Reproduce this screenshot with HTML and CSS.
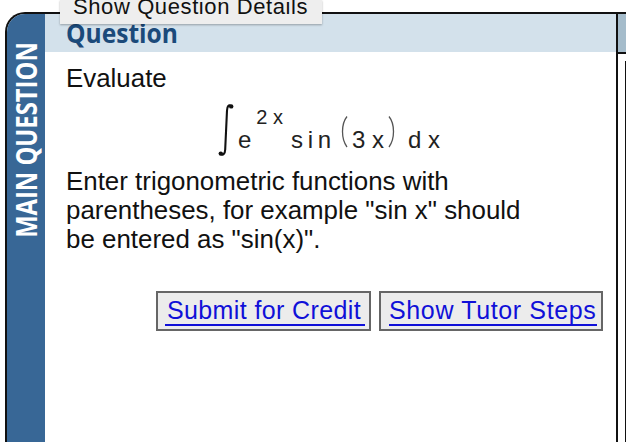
FILE: index.html
```html
<!DOCTYPE html>
<html lang="en">
<head>
<meta charset="utf-8">
<title>Main Question</title>
<link rel="stylesheet" href="styles.css">
</head>
<body>
<div class="tooltip">Show Question Details</div>
<div class="frame">
  <div class="panel">
    <aside class="side"><span class="side-label">MAIN QUESTION</span></aside>
    <main class="content">
      <h1 class="head"><span class="head-text">Question</span></h1>
      <div class="body">
        <p class="line">Evaluate</p>
        <div class="math">
          <svg class="integral" width="16" height="54" viewBox="0 0 16 54"><path d="M13 3C10.8 1.4 9.2 3 9 7.5L7.2 46.5C7 51 5 52.6 2.8 51" fill="none" stroke="#111" stroke-width="2.1"/><circle cx="13.2" cy="3.4" r="2.2" fill="#111"/><circle cx="2.8" cy="50.6" r="2.2" fill="#111"/></svg>
          <span class="m-base">e</span>
          <span class="m-sup">2 x</span>
          <span class="m-fn">s i n</span>
          <svg class="paren paren-open" width="13" height="34" viewBox="0 0 13 34"><path d="M10 1.5C4 9 4 24 10 32" fill="none" stroke="#555" stroke-width="1.3"/></svg>
          <span class="m-arg">3 x</span>
          <svg class="paren paren-close" width="13" height="34" viewBox="0 0 13 34"><path d="M2 1.5C8 9 8 24 2 32" fill="none" stroke="#555" stroke-width="1.3"/></svg>
          <span class="m-dx">d x</span>
        </div>
        <p class="para">Enter trigonometric functions with<br>parentheses, for example "sin x" should<br>be entered as "sin(x)".</p>
        <div class="actions">
          <div class="btn btn-submit"><a href="#" class="btn-link btn-link-submit">Submit for Credit</a></div>
          <div class="btn btn-tutor"><a href="#" class="btn-link btn-link-tutor">Show Tutor Steps</a></div>
        </div>
      </div>
    </main>
  </div>
  <div class="rail"><div class="rail-top"></div><div class="rail-body"></div></div>
</div>
</body>
</html>
```
FILE: styles.css
```css
html, body {
  margin: 0;
  padding: 0;
  width: 626px;
  height: 442px;
  overflow: hidden;
  background: #fff;
  font-family: "Liberation Sans", Arial, sans-serif;
  color: #111;
}
.tooltip {
  position: absolute;
  left: 60px;
  top: 0;
  width: 262px;
  height: 24px;
  box-sizing: border-box;
  padding-left: 13px;
  background: #eeeeee;
  box-shadow: 0 1px 2px rgba(0,0,0,.3);
  font-size: 22px;
  line-height: 14px;
  letter-spacing: 0.6px;
  white-space: nowrap;
  color: #111;
  z-index: 2;
}
.frame {
  display: flex;
  margin-top: 12px;
  margin-left: 5px;
  height: 430px;
}
.panel {
  display: flex;
  width: 613px;
  flex: none;
  box-sizing: border-box;
  border-top: 2px solid #111;
  border-left: 2px solid #111;
  border-right: 2px solid #111;
  border-top-left-radius: 20px;
  overflow: hidden;
}
.side {
  width: 38px;
  flex: none;
  background: #386796;
  display: flex;
  justify-content: center;
  align-items: flex-start;
}
.side-label {
  writing-mode: vertical-rl;
  transform: rotate(180deg) scaleY(0.85);
  transform-origin: center;
  margin-top: 11px;
  color: #fff;
  font-family: "Open Sans", sans-serif;
  font-weight: 700;
  font-size: 28px;
  line-height: 38px;
  white-space: nowrap;
}
.content { flex: 1; min-width: 0; }
.head {
  margin: 0;
  height: 38px;
  box-sizing: border-box;
  padding-left: 21px;
  background: #d3e1eb;
  color: #1b4a7a;
  font-family: "Open Sans", sans-serif;
  font-weight: 700;
  font-size: 27px;
  line-height: 38px;
}
.head-text {
  display: inline-block;
  transform: scaleX(0.91);
  transform-origin: left center;
}
.body {
  padding-left: 21px;
  font-size: 25.9px;
  line-height: 29px;
}
.line { margin: 12px 0 0; }
.math {
  display: flex;
  align-items: flex-start;
  height: 55px;
  margin-top: 15px;
  padding-left: 152px;
  font-size: 24px;
  line-height: 28px;
  color: #222;
  white-space: nowrap;
}
.integral { margin-top: -5px; flex: none; }
.m-base { margin-top: 18px; margin-left: 4px; }
.m-sup { margin-top: -5px; margin-left: 5px; font-size: 20px; }
.m-fn { margin-top: 18px; margin-left: 8px; word-spacing: -2px; }
.paren { margin-top: 7px; flex: none; }
.paren-open { margin-left: 6px; }
.paren-close { margin-left: 3px; }
.m-arg { margin-top: 18px; margin-left: 2px; }
.m-dx { margin-top: 18px; margin-left: 8px; }
.para { margin: 4px 0 0; }
.actions {
  display: flex;
  gap: 8px;
  margin-top: 37px;
  padding-left: 90px;
}
.btn {
  height: 40px;
  box-sizing: border-box;
  border: 2px solid #666;
  background: #ececec;
  display: flex;
  align-items: flex-start;
}
.btn-submit { padding: 0 4px 0 7px; }
.btn-tutor { padding: 0 4px 0 8px; }
.btn-link {
  display: block;
  font-size: 25px;
  line-height: 28px;
  color: #1010d8;
  text-decoration: none;
  border-bottom: 2px solid #1010d8;
  white-space: nowrap;
}
.btn-link-submit { padding: 3px 4px 0 2px; letter-spacing: 0.38px; }
.btn-link-tutor { padding: 3px 1px 0 0; letter-spacing: 0.63px; }
.rail { flex: 1; display: flex; flex-direction: column; }
.rail-top {
  height: 38px;
  margin-top: 2px;
  background: #a5bccb;
  border-bottom: 2px solid #111;
  box-shadow: 0 -2px 0 #111;
}
.rail-body {
  flex: 1;
  margin-top: 7px;
  border-right: 1px solid #111;
}
```
